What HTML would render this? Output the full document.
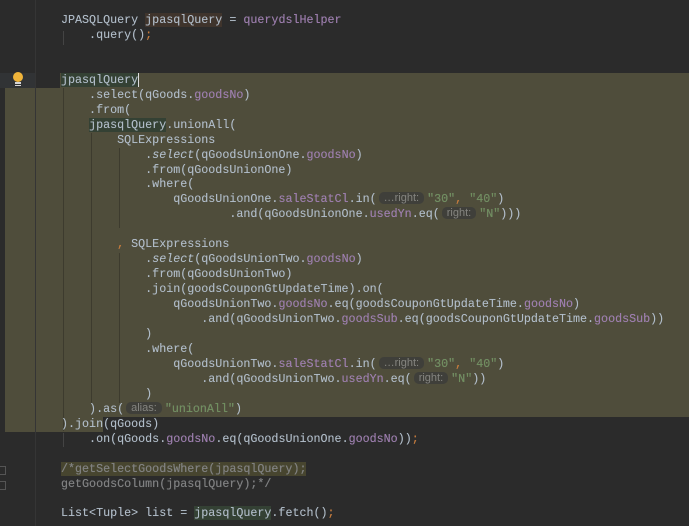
<!DOCTYPE html>
<html><head><meta charset="utf-8"><style>
html,body{margin:0;padding:0;}
body{width:689px;height:526px;background:#2b2b2b;position:relative;overflow:hidden;font-family:"Liberation Mono",monospace;}
.hl{position:absolute;background:#4f4d3b;}
.gl{position:absolute;width:1px;background:#3a3a3a;}
pre{position:absolute;left:61px;top:13px;margin:0;font-family:"Liberation Mono",monospace;font-size:11.7px;line-height:14.95px;color:#b1bdc9;text-shadow:0 0 0.4px rgba(177,189,201,0.6);}
.p{color:#9f7bb0}.s{color:#6f8f5c}.o{color:#cc7832}.c{color:#808080}.i{font-style:italic}
.h{display:inline-block;background:#3f3f3a;color:#858580;font-family:"Liberation Sans",sans-serif;font-size:11px;line-height:12px;padding:0 5px;border-radius:5px;margin:0 3px 0 2px;vertical-align:1px;text-shadow:none}
.g{background:#344134}
.b{background:#3f342c}
.cm{background:#47452f}
</style></head><body>
<div style="position:absolute;left:0;top:73px;width:35px;height:15px;background:#313335"></div>
<div class="hl" style="left:60px;top:73px;width:629px;height:15px"></div>
<div class="hl" style="left:5px;top:88px;width:684px;height:329px"></div>
<div class="hl" style="left:5px;top:417px;width:98px;height:15px"></div>
<div class="gl" style="left:35px;top:0;height:526px;background:#353535"></div>
<div class="gl" style="left:63px;top:31px;height:14px;background:#444"></div>
<div class="gl" style="left:63px;top:88px;height:343px;background:#3d3b2e"></div>
<div class="gl" style="left:91px;top:133px;height:270px;background:#3d3b2e"></div>
<div class="gl" style="left:119px;top:148px;height:80px;background:#3d3b2e"></div>
<div class="gl" style="left:119px;top:253px;height:150px;background:#3d3b2e"></div>
<div class="gl" style="left:63px;top:433px;height:14px;background:#444"></div>
<div style="position:absolute;left:13px;top:72px;width:10px;height:10px;border-radius:50%;background:#f0b43a"></div>
<div style="position:absolute;left:15px;top:82px;width:6px;height:2px;background:#d6d6d6"></div>
<div style="position:absolute;left:15px;top:85px;width:6px;height:1px;background:#d6d6d6"></div>
<div style="position:absolute;left:0;top:466px;width:5px;height:7px;border:1px solid #555;border-left:none"></div>
<div style="position:absolute;left:0;top:481px;width:5px;height:7px;border:1px solid #555;border-left:none"></div>
<pre>JPASQLQuery <span class="b">jpasqlQuery</span> = <span class="p">querydslHelper</span>
    .query()<span class="o">;</span>


<span class="g">jpasqlQuery</span><span style="border-left:1px solid #ddd"></span>
    .select(qGoods.<span class="p">goodsNo</span>)
    .from(
    <span class="g">jpasqlQuery</span>.unionAll(
        SQLExpressions
            .<span class="i">select</span>(qGoodsUnionOne.<span class="p">goodsNo</span>)
            .from(qGoodsUnionOne)
            .where(
                qGoodsUnionOne.<span class="p">saleStatCl</span>.in(<span class="h">…right:</span><span class="s">"30"</span><span class="o">,</span> <span class="s">"40"</span>)
                        .and(qGoodsUnionOne.<span class="p">usedYn</span>.eq(<span class="h">right:</span><span class="s">"N"</span>)))

        <span class="o">,</span> SQLExpressions
            .<span class="i">select</span>(qGoodsUnionTwo.<span class="p">goodsNo</span>)
            .from(qGoodsUnionTwo)
            .join(goodsCouponGtUpdateTime).on(
                qGoodsUnionTwo.<span class="p">goodsNo</span>.eq(goodsCouponGtUpdateTime.<span class="p">goodsNo</span>)
                    .and(qGoodsUnionTwo.<span class="p">goodsSub</span>.eq(goodsCouponGtUpdateTime.<span class="p">goodsSub</span>))
            )
            .where(
                qGoodsUnionTwo.<span class="p">saleStatCl</span>.in(<span class="h">…right:</span><span class="s">"30"</span><span class="o">,</span> <span class="s">"40"</span>)
                    .and(qGoodsUnionTwo.<span class="p">usedYn</span>.eq(<span class="h">right:</span><span class="s">"N"</span>))
            )
    ).as(<span class="h">alias:</span><span class="s">"unionAll"</span>)
).join(qGoods)
    .on(qGoods.<span class="p">goodsNo</span>.eq(qGoodsUnionOne.<span class="p">goodsNo</span>))<span class="o">;</span>

<span class="c cm">/*getSelectGoodsWhere(jpasqlQuery);</span>
<span class="c">getGoodsColumn(jpasqlQuery);*/</span>

List&lt;Tuple&gt; list = <span class="g">jpasqlQuery</span>.fetch()<span class="o">;</span></pre>
</body></html>
